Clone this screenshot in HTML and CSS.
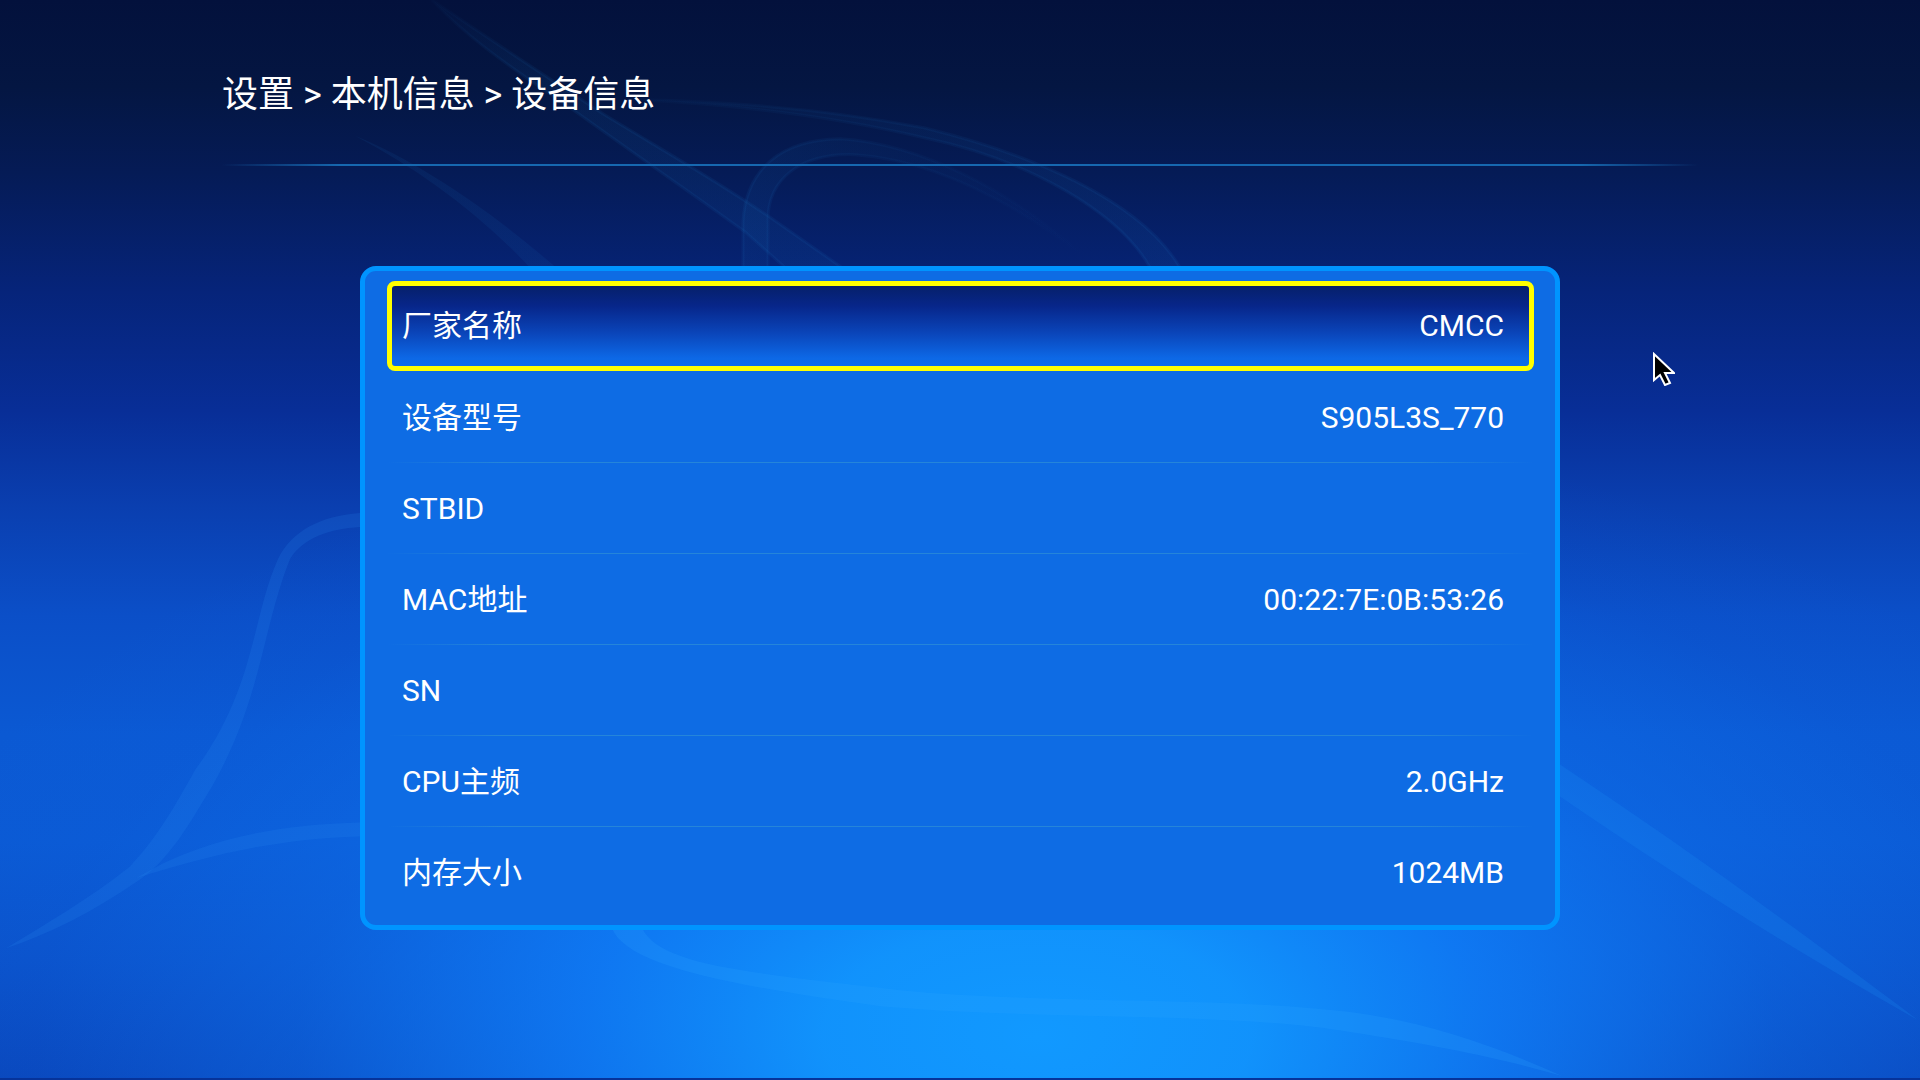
FILE: index.html
```html
<!DOCTYPE html>
<html lang="zh-CN">
<head>
    <meta charset="UTF-8">
    <meta name="viewport" content="width=device-width, initial-scale=1.0">
    <title>设备信息</title>
    <link rel="stylesheet" href="styles.css">
</head>
<body>
    <!-- background ribbons -->
    <svg class="ribbons" viewBox="0 0 1920 1080" preserveAspectRatio="none" aria-hidden="true">
        <defs>
            <linearGradient id="fade-down" gradientUnits="userSpaceOnUse" x1="0" y1="0" x2="0" y2="270">
                <stop offset="0" stop-color="#1878c8" stop-opacity="0.02"/>
                <stop offset="0.3" stop-color="#1878c8" stop-opacity="0.09"/>
                <stop offset="1" stop-color="#1878c8" stop-opacity="0.09"/>
            </linearGradient>
            <linearGradient id="fade-right" gradientUnits="userSpaceOnUse" x1="620" y1="0" x2="1180" y2="0">
                <stop offset="0" stop-color="#1878c8" stop-opacity="0.03"/>
                <stop offset="1" stop-color="#1878c8" stop-opacity="0.1"/>
            </linearGradient>
            <linearGradient id="fade-loop" gradientUnits="userSpaceOnUse" x1="740" y1="0" x2="1090" y2="0">
                <stop offset="0" stop-color="#1878c8" stop-opacity="0.09"/>
                <stop offset="1" stop-color="#1878c8" stop-opacity="0"/>
            </linearGradient>
        </defs>
        <g class="ribbon-edge" fill="url(#fade-down)" stroke="url(#fade-down)">
            <path d="M432 0 C475 46 525 76 580 115 C640 158 695 196 746 233 L785 268 L842 268 L769 217 C715 180 655 146 603 114 C545 76 485 36 432 0 Z"/>
            <path stroke="none" d="M355 136 C420 170 480 215 530 268 L556 268 C495 215 425 165 355 136 Z"/>
        </g>
        <path class="ribbon-edge" fill="url(#fade-right)" stroke="url(#fade-right)" d="M640 100 C750 102 840 112 924 128 C1030 154 1140 200 1180 268 L1150 268 C1120 214 1030 160 924 138 C840 118 750 106 640 100 Z"/>
        <path class="ribbon-edge" fill="url(#fade-loop)" stroke="url(#fade-loop)" d="M743 268 L743 222 C746 170 780 140 840 139 C920 144 1010 190 1086 258 C1010 200 930 160 855 155 C800 153 768 180 768 220 L768 268 Z"/>
        <g fill="#2c8df0" fill-opacity="0.16">
            <path d="M360 514 C320 517 292 532 278 560 C252 618 255 690 196 770 C176 805 160 836 130 868 C90 900 45 926 6 950 C50 936 95 912 136 884 C170 862 190 824 212 788 C262 700 262 630 290 560 C304 538 330 530 360 528 Z"/>
            <path d="M360 824 C280 826 200 840 136 880 C210 856 280 840 360 838 Z"/>
        </g>
        <path fill="#2fa4ff" fill-opacity="0.2" d="M612 930 C626 966 720 986 880 1008 C1040 1022 1240 1014 1350 1034 C1440 1048 1500 1060 1562 1078 C1500 1050 1430 1024 1350 1014 C1220 998 1040 1006 900 992 C740 974 660 966 642 930 Z"/>
        <path fill="#1d92f5" fill-opacity="0.2" d="M1560 766 C1680 846 1790 925 1918 1022 C1790 950 1680 880 1560 798 Z"/>
    </svg>

    <header class="page-header">
        <h1 class="breadcrumb">设置 &gt; 本机信息 &gt; 设备信息</h1>
    </header>

    <main class="panel">
        <table class="info-table">
            <tbody>
                <tr class="info-row selected"><th scope="row">厂家名称</th><td>CMCC</td></tr>
                <tr class="info-row"><th scope="row">设备型号</th><td>S905L3S_770</td></tr>
                <tr class="info-row"><th scope="row">STBID</th><td></td></tr>
                <tr class="info-row"><th scope="row">MAC地址</th><td>00:22:7E:0B:53:26</td></tr>
                <tr class="info-row"><th scope="row">SN</th><td></td></tr>
                <tr class="info-row"><th scope="row">CPU主频</th><td>2.0GHz</td></tr>
                <tr class="info-row"><th scope="row">内存大小</th><td>1024MB</td></tr>
            </tbody>
        </table>
    </main>

    <svg class="cursor" viewBox="0 0 22 34" aria-hidden="true">
        <path d="M1 2 V28 L7 23 L12 33 L17 31 L12 21 H21 Z"/>
    </svg>
</body>
</html>
```

FILE: styles.css
```css
* {
    box-sizing: border-box;
}
body {
    margin: 0;
    min-height: 100vh;
    position: relative;
    overflow: hidden;
    color: #fff;
    font-family: Roboto, "Noto Sans CJK SC", sans-serif;
    border-bottom: 2px solid #06339a;
    background:
        radial-gradient(ellipse 62% 58% at 54% 96%, #1199ff 0%, rgba(17, 150, 255, 0.95) 18%, rgba(16, 132, 255, 0.75) 38%, rgba(14, 115, 240, 0.4) 62%, rgba(12, 100, 230, 0.12) 84%, rgba(12, 100, 230, 0) 100%),
        linear-gradient(#03113c 0%, #041642 8%, #051b56 16%, #06247a 27%, #082e97 38%, #0a3fb0 47%, #0b4fc8 57%, #0b59d3 68%, #0b5ad4 78%, #0b52ca 89%, #0a46ba 100%);
}
.ribbons {
    position: absolute;
    top: 0;
    left: 0;
    width: 100%;
    height: 100%;
}
.ribbon-edge {
    stroke-width: 3;
}
.page-header {
    position: relative;
    margin: 0 222px 100px;
    padding: 67px 0 43px;
}
.page-header::after {
    content: "";
    position: absolute;
    left: 0;
    right: 0;
    bottom: 0;
    height: 2px;
    background: linear-gradient(to right, transparent, #1668b0 8%, #1668b0 92%, transparent);
}
.breadcrumb {
    margin: 0;
    font-size: 36px;
    font-weight: 400;
    line-height: 56px;
}

/* Info panel */
.panel {
    position: relative;
    width: 1200px;
    max-width: 100%;
    margin: 0 auto;
    padding: 10px 21px 7px 22px;
    border: 5px solid #0094ff;
    border-radius: 16px;
    background: #0e6ce4;
}
.info-table,
.info-table tbody {
    display: block;
}
.info-row {
    position: relative;
    display: flex;
    align-items: center;
    justify-content: space-between;
    height: 91px;
    padding: 0 30px 0 15px;
    font-size: 30px;
    line-height: 44px;
}
.info-row:not(.selected):not(:last-child)::after {
    content: "";
    position: absolute;
    left: 0;
    right: 0;
    bottom: 0;
    height: 1px;
    background: linear-gradient(to right, transparent, #2585da 10%, #2585da 90%, transparent);
}
.info-row th,
.info-row td {
    padding: 0;
    font-weight: 400;
}
.selected {
    height: 90px;
    margin-bottom: 1px;
    padding: 0 25px 0 10px;
    border: 5px solid #ff0;
    border-radius: 8px;
    background: linear-gradient(#06206a, #07268a 25%, #0a44b8 58%, #0d68e6 90%, #0e6ce8);
}

.cursor {
    position: absolute;
    left: 86%;
    top: 352px;
    width: 22px;
    height: 34px;
    margin-left: 2px;
    fill: #000;
    stroke: #fff;
    stroke-width: 2;
}
```
